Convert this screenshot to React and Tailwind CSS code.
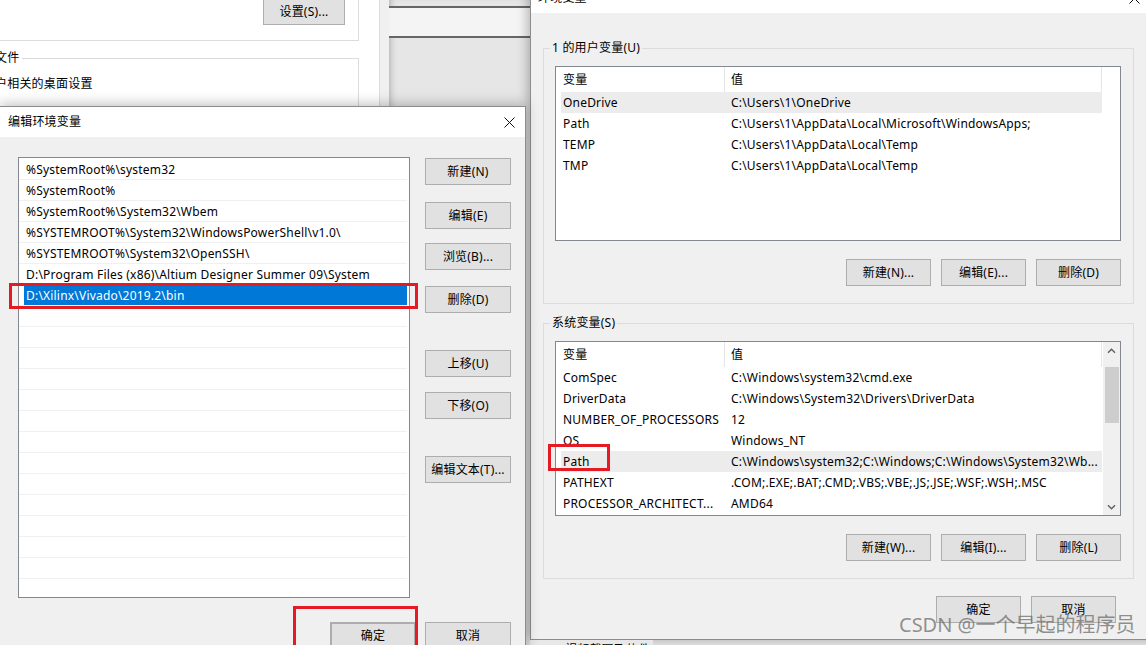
import React from "react";

const pathItems = [
  "%SystemRoot%\\system32",
  "%SystemRoot%",
  "%SystemRoot%\\System32\\Wbem",
  "%SYSTEMROOT%\\System32\\WindowsPowerShell\\v1.0\\",
  "%SYSTEMROOT%\\System32\\OpenSSH\\",
  "D:\\Program Files (x86)\\Altium Designer Summer 09\\System",
  "D:\\Xilinx\\Vivado\\2019.2\\bin",
];

const userVars = [
  ["OneDrive", "C:\\Users\\1\\OneDrive"],
  ["Path", "C:\\Users\\1\\AppData\\Local\\Microsoft\\WindowsApps;"],
  ["TEMP", "C:\\Users\\1\\AppData\\Local\\Temp"],
  ["TMP", "C:\\Users\\1\\AppData\\Local\\Temp"],
];

const sysVars = [
  ["ComSpec", "C:\\Windows\\system32\\cmd.exe"],
  ["DriverData", "C:\\Windows\\System32\\Drivers\\DriverData"],
  ["NUMBER_OF_PROCESSORS", "12"],
  ["OS", "Windows_NT"],
  ["Path", "C:\\Windows\\system32;C:\\Windows;C:\\Windows\\System32\\Wb..."],
  ["PATHEXT", ".COM;.EXE;.BAT;.CMD;.VBS;.VBE;.JS;.JSE;.WSF;.WSH;.MSC"],
  ["PROCESSOR_ARCHITECT...", "AMD64"],
];

const CloseIcon = () => (
  <svg width="11" height="11" viewBox="0 0 11 11">
    <path d="M0.5 0.5L10.5 10.5M10.5 0.5L0.5 10.5" stroke="#111" strokeWidth="1" fill="none" />
  </svg>
);

const Chevron = ({ down }) => (
  <svg width="9" height="6" viewBox="0 0 9 6">
    <path
      d={down ? "M1 1.2L4.5 4.8L8 1.2" : "M1 4.8L4.5 1.2L8 4.8"}
      stroke="#606060"
      strokeWidth="1.4"
      fill="none"
    />
  </svg>
);

const Btn = ({ children, className = "" }) => (
  <button
    type="button"
    className={`flex items-center justify-center h-[27px] bg-[#e1e1e1] border border-[#adadad] text-[12px] text-black ${className}`}
  >
    {children}
  </button>
);

const ListView = ({ rows, active, scroll }) => (
  <div className="ml-[11px] mt-[17px] w-[566px] h-[175px] border border-[#828790] bg-white flex overflow-hidden">
    <div className="flex-1 pl-[5px]">
      <div className="w-[541px] h-[25px] flex items-center border-r border-[#e5e5e5]">
        <div className="w-[164px] h-full flex items-center pl-[2px] border-r border-[#e5e5e5]">变量</div>
        <div className="pl-[6px]">值</div>
      </div>
      {rows.map(([name, value], i) => (
        <div
          key={name + i}
          className={`w-[541px] h-[21px] flex items-center ${i === active ? "bg-[#ececec]" : ""}`}
        >
          <div className="w-[170px] pl-[2px] whitespace-nowrap overflow-hidden">{name}</div>
          <div className="whitespace-nowrap">{value}</div>
        </div>
      ))}
    </div>
    {scroll && (
      <div className="w-[17px] h-full bg-[#f0f0f0] flex flex-col items-center">
        <div className="h-[17px] flex items-center justify-center">
          <Chevron />
        </div>
        <div className="mt-[8px] w-[14px] h-[56px] bg-[#cdcdcd]" />
        <div className="flex-1" />
        <div className="h-[17px] flex items-center justify-center">
          <Chevron down />
        </div>
      </div>
    )}
  </div>
);

const GroupBox = ({ label, children, className = "" }) => (
  <div className={`relative w-[591px] h-[256px] border border-[#dcdcdc] ${className}`}>
    <span className="absolute left-[6px] top-[-9px] px-[2px] bg-[#f0f0f0] leading-[16px]">{label}</span>
    {children}
  </div>
);

export default function App() {
  return (
    <div className="relative w-[1146px] h-[645px] overflow-hidden bg-[#e6e6e6] text-[12px] tracking-[0.2px] text-black font-['Noto_Sans','Noto_Sans_CJK_SC',sans-serif]">
      {/* back window: system properties */}
      <div className="absolute left-0 top-0 w-[380px] h-[106px] bg-white border-r border-[#dcdcdc] shadow-[2px_0_8px_rgba(0,0,0,0.25)]">
        <div className="w-[359px] h-[41px] border-r border-b border-[#dcdcdc] flex items-end justify-end pr-[13px] pb-[15px]">
          <Btn className="w-[82px] h-[26px]">设置(S)...</Btn>
        </div>
        <div className="mt-[17px] w-[359px] h-[60px] border-t border-r border-[#dcdcdc] relative">
          <span className="absolute left-[-5px] top-[-9px] pr-[3px] bg-white leading-[16px]">文件</span>
          <div className="mt-[16px] ml-[-5px] whitespace-nowrap">户相关的桌面设置</div>
        </div>
      </div>
      <div className="absolute left-[380px] top-0 w-[9px] h-[106px] bg-[#f0f0f0]" />
      <div className="absolute left-[389px] top-0 w-[141px] h-[645px] flex flex-col shadow-[inset_6px_0_6px_-4px_rgba(0,0,0,0.2)]">
        <div className="h-[6px]" />
        <div className="h-[2px] bg-[#666]" />
        <div className="h-[28px] bg-[#f4f4f4]" />
        <div className="h-[2px] bg-[#666]" />
        <div className="flex-1" />
      </div>

      {/* right dialog: 环境变量 */}
      <div className="absolute left-[530px] top-[-17px] w-[640px] h-[657px] bg-[#f0f0f0] border-l border-b border-[#8c8c8c] shadow-[-3px_0_10px_rgba(0,0,0,0.25)]">
        <div className="h-[30px] bg-white flex items-center justify-between pl-[7px] pr-[30px]">
          <span>环境变量</span>
          <CloseIcon />
        </div>
        <div className="pl-[12px] pt-[35px]">
          <GroupBox label="1 的用户变量(U)">
            <ListView rows={userVars} active={0} />
            <div className="mt-[18px] flex justify-end gap-[10px] pr-[12px]">
              <Btn className="w-[85px]">新建(N)...</Btn>
              <Btn className="w-[85px]">编辑(E)...</Btn>
              <Btn className="w-[85px]">删除(D)</Btn>
            </div>
          </GroupBox>
          <GroupBox label="系统变量(S)" className="mt-[19px]">
            <ListView rows={sysVars} active={4} scroll />
            <div className="mt-[18px] flex justify-end gap-[10px] pr-[12px]">
              <Btn className="w-[85px]">新建(W)...</Btn>
              <Btn className="w-[85px]">编辑(I)...</Btn>
              <Btn className="w-[85px]">删除(L)</Btn>
            </div>
          </GroupBox>
          <div className="w-[591px] mt-[17px] flex justify-end gap-[10px] pr-[18px]">
            <Btn className="w-[85px]">确定</Btn>
            <Btn className="w-[85px]">取消</Btn>
          </div>
        </div>
      </div>
      <div className="absolute left-[530px] top-[640px] w-[123px] h-[5px] bg-[#e8e8e8] overflow-hidden">
        <div className="pl-[35px] pt-[3px] whitespace-nowrap leading-[14px]">视频截图及软件</div>
      </div>

      {/* left dialog: 编辑环境变量 */}
      <div className="absolute left-0 top-[106px] w-[526px] h-[560px] bg-[#f0f0f0] border-t border-r border-[#8c8c8c] shadow-[0_-2px_12px_rgba(0,0,0,0.25)]">
        <div className="h-[30px] bg-white flex items-center justify-between pl-[8px] pr-[10px]">
          <span>编辑环境变量</span>
          <CloseIcon />
        </div>
        <div className="flex pl-[18px] pt-[20px]">
          <div className="w-[392px] h-[441px] pt-[1px] border border-[#828790] bg-white overflow-hidden">
            {Array.from({ length: 22 }).map((_, i) => (
              <div key={i} className="h-[21px] mr-[2px] border-b border-[#f0f0f0] flex items-center">
                {i === 6 ? (
                  <div className="ml-[5px] w-full h-[20px] bg-[#0078d7] text-white pl-[2px] pt-[1px] flex items-center">
                    {pathItems[i]}
                  </div>
                ) : (
                  <span className="pl-[7px] pt-[1px] whitespace-nowrap">{pathItems[i] || ""}</span>
                )}
              </div>
            ))}
          </div>
          <div className="ml-[15px] w-[86px] flex flex-col">
            <Btn className="mt-[1px]">新建(N)</Btn>
            <Btn className="mt-[17px]">编辑(E)</Btn>
            <Btn className="mt-[14px]">浏览(B)...</Btn>
            <Btn className="mt-[16px]">删除(D)</Btn>
            <Btn className="mt-[37px]">上移(U)</Btn>
            <Btn className="mt-[15px]">下移(O)</Btn>
            <Btn className="mt-[37px]">编辑文本(T)...</Btn>
          </div>
        </div>
        <div className="mt-[24px] flex justify-end gap-[9px] pr-[14px]">
          <Btn className="w-[86px] border-2 border-[#0078d7]">确定</Btn>
          <Btn className="w-[86px]">取消</Btn>
        </div>
      </div>

      {/* red annotation boxes */}
      <div className="absolute left-[9px] top-[283px] w-[409px] h-[26px] border-[3px] border-[#e41b23]" />
      <div className="absolute left-[293px] top-[606px] w-[125px] h-[50px] border-[3px] border-[#e41b23]" />
      <div className="absolute left-[548px] top-[444px] w-[62px] h-[27px] border-[3px] border-[#e41b23]" />

      {/* watermark */}
      <div className="absolute left-[899px] top-[611px] text-[20px] leading-[28px] tracking-normal text-[rgba(110,110,110,0.75)] whitespace-nowrap">
        CSDN @一个早起的程序员
      </div>
    </div>
  );
}
